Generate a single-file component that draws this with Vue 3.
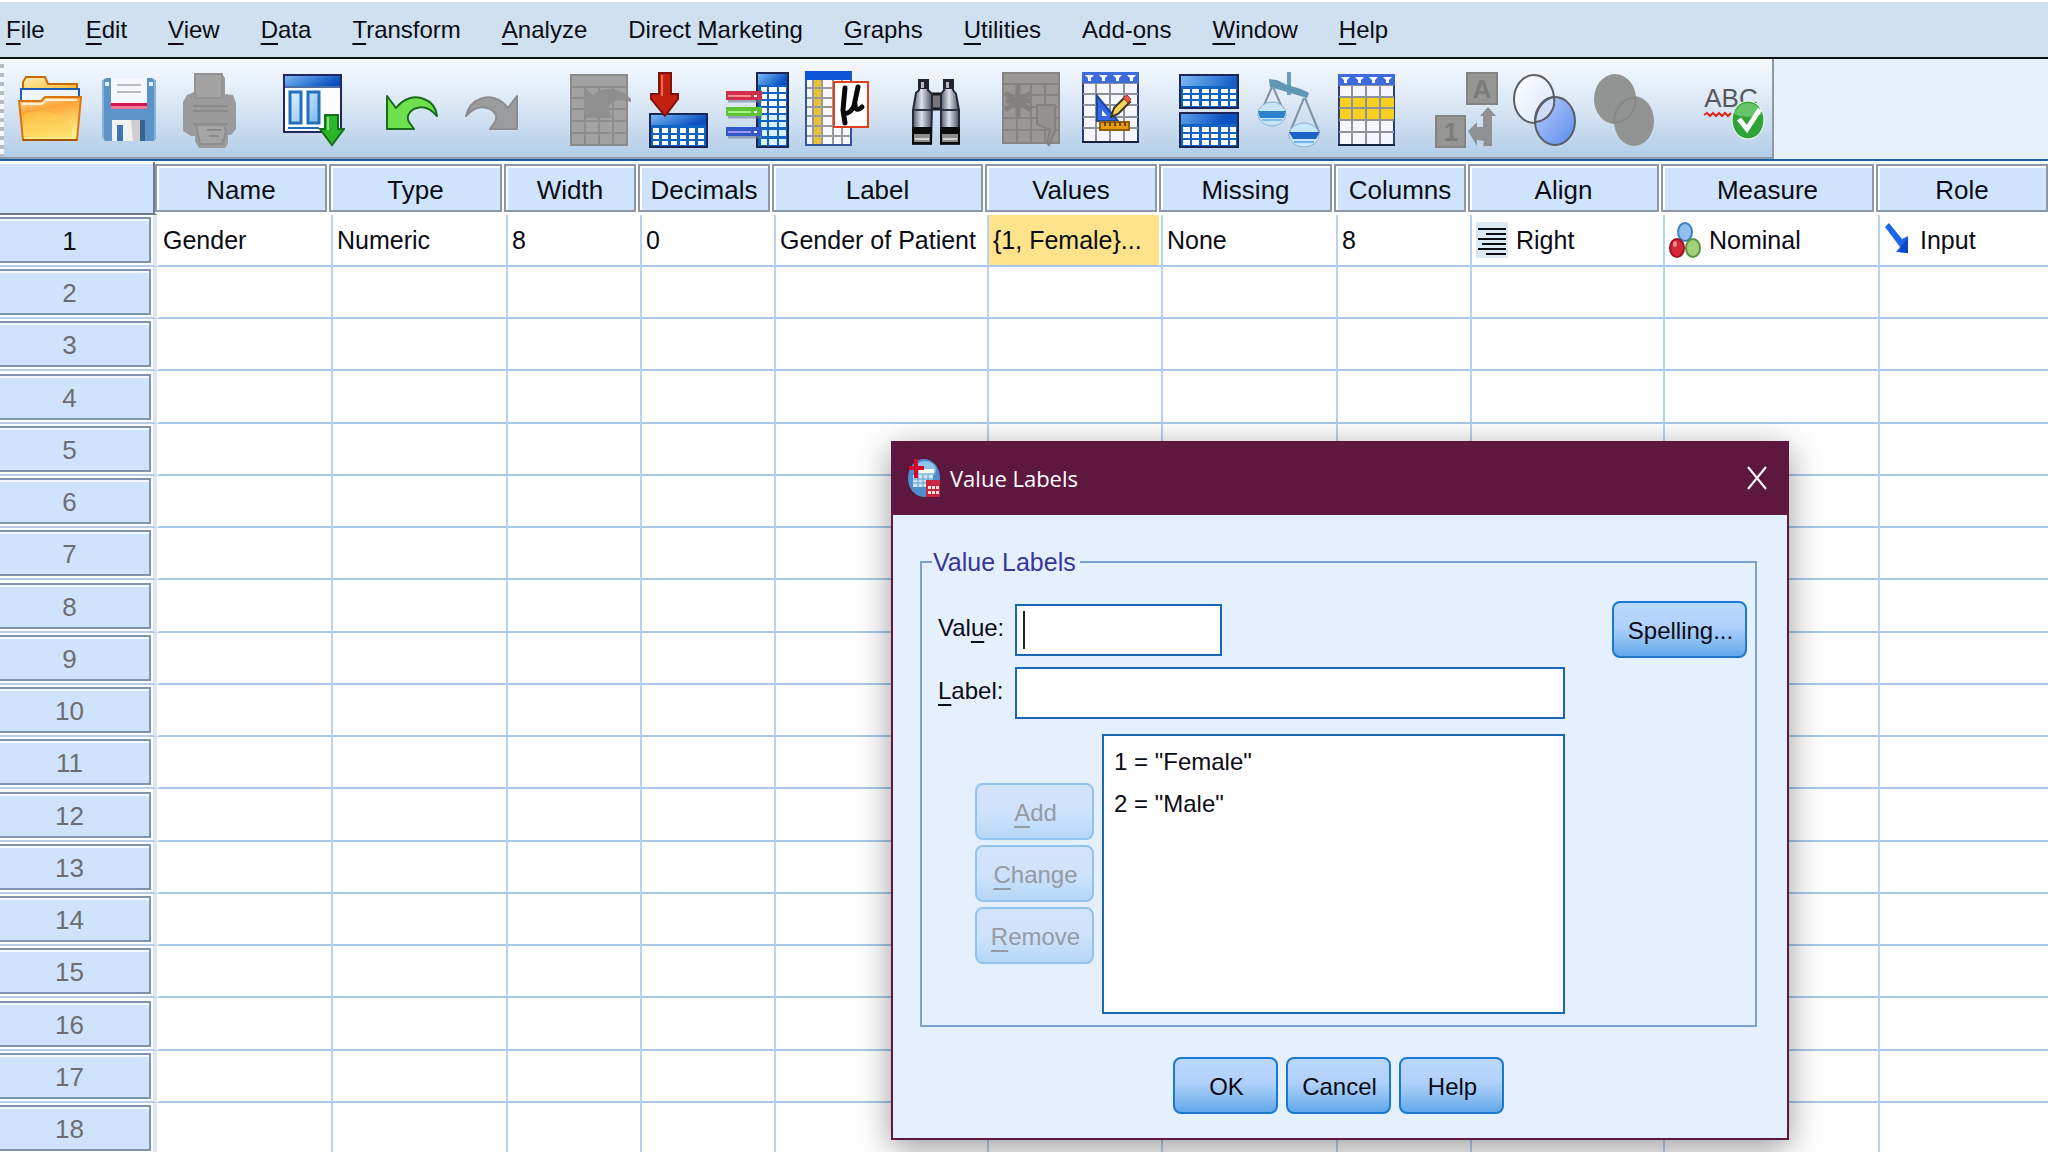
<script setup>
import { ref } from 'vue'

const menus = [
  ['', 'F', 'ile'],
  ['', 'E', 'dit'],
  ['', 'V', 'iew'],
  ['', 'D', 'ata'],
  ['', 'T', 'ransform'],
  ['', 'A', 'nalyze'],
  ['Direct ', 'M', 'arketing'],
  ['', 'G', 'raphs'],
  ['', 'U', 'tilities'],
  ['Add-', 'o', 'ns'],
  ['', 'W', 'indow'],
  ['', 'H', 'elp'],
]

const columns = [
  { name: 'Name', cls: 'w-name' },
  { name: 'Type', cls: 'w-type' },
  { name: 'Width', cls: 'w-small' },
  { name: 'Decimals', cls: 'w-small' },
  { name: 'Label', cls: 'w-label' },
  { name: 'Values', cls: 'w-name' },
  { name: 'Missing', cls: 'w-type' },
  { name: 'Columns', cls: 'w-small' },
  { name: 'Align', cls: 'w-align' },
  { name: 'Measure', cls: 'w-measure' },
  { name: 'Role', cls: 'w-role' },
]

const variable = {
  Name: 'Gender',
  Type: 'Numeric',
  Width: '8',
  Decimals: '0',
  Label: 'Gender of Patient',
  Values: '{1, Female}...',
  Missing: 'None',
  Columns: '8',
  Align: 'Right',
  Measure: 'Nominal',
  Role: 'Input',
}

const value = ref('')
const label = ref('')
const valueLabels = ['1 = "Female"', '2 = "Male"']
</script>

<template>
  <div class="app">
    <nav class="menubar">
      <a v-for="m in menus" :key="m.join('')" href="#">{{ m[0] }}<u>{{ m[1] }}</u>{{ m[2] }}</a>
    </nav>

    <div class="toolbar-row">
      <div class="toolbar" role="toolbar">
        <span class="grip"></span>

        <div class="group">
          <button type="button" aria-label="Open">
            <svg viewBox="0 0 64 80">
              <defs>
                <linearGradient id="gFolder" x1="0" y1="0" x2="0.3" y2="1">
                  <stop offset="0" stop-color="#ffe3b5" />
                  <stop offset="0.35" stop-color="#ffa53a" />
                  <stop offset="1" stop-color="#fff08a" />
                </linearGradient>
                <linearGradient id="gTab" x1="0" y1="0" x2="1" y2="1">
                  <stop offset="0" stop-color="#fff2b0" />
                  <stop offset="1" stop-color="#f7a50e" />
                </linearGradient>
              </defs>
              <path d="M5 28V12l3-5h19l3 7h29v14z" fill="url(#gTab)" stroke="#c8690a" stroke-width="2" />
              <path d="M3 34V19h58v20z" fill="#eef6ff" stroke="#1d5cb8" stroke-width="2" />
              <path d="M1 31h22l4-4h36l-4 43H5z" fill="url(#gFolder)" stroke="#dd7210" stroke-width="2" />
              <path d="M5 45c16-7 36-4 50 10l-2 12H7z" fill="#ffcf4c" opacity="0.55" />
              <path d="M4 34h20l4-4h31" fill="none" stroke="#fff0d5" stroke-width="2" />
              <path d="M5 70h54" stroke="#a85408" stroke-width="2" />
            </svg>
          </button>
          <button type="button" aria-label="Save">
            <svg viewBox="0 0 64 80">
              <path d="M6 10l3-2h46l3 2v60l-2 1H8l-2-3z" fill="#5b93c7" />
              <path d="M6 10v58M58 10v60" stroke="#86b2dc" stroke-width="2" />
              <path d="M14 8h36v25H14z" fill="#f6f8fd" />
              <path d="M14 33h36v3H14z" fill="#d3134b" />
              <path d="M14 36h36v3H14z" fill="#f0799a" />
              <path d="M20 15h24M20 22h24" stroke="#b9bcc2" stroke-width="2" />
              <path d="M8 12h4v4H8zM52 12h4v4h-4z" fill="#e4effa" />
              <path d="M15 50h28v21H15z" fill="#f1f1f1" />
              <path d="M34 50h9v21h-7z" fill="#cfcfcf" />
              <path d="M43 50h5v21h-5z" fill="#356495" />
              <path d="M20 55h6v16h-6z" fill="#3a76b4" />
            </svg>
          </button>
          <button type="button" aria-label="Print" disabled>
            <svg viewBox="0 0 64 80">
              <path d="M19 4h27l3 4v16l8 1 3 8v26l-5 6h-3v8l-3 5H23l-4-7v-5h-4l-8-5V32l4-7 7-3z" fill="#9b9b9b" />
              <path d="M19 4h27v24H19z" fill="#a3a3a3" stroke="#929292" stroke-width="2" />
              <path d="M17 36h35M17 41h35M17 54h35" stroke="#8a8a8a" stroke-width="2" />
              <path d="M20 55h28l2 7-4 12H24z" fill="#a5a5a5" stroke="#8e8e8e" stroke-width="2" />
              <path d="M31 60h14M33 66h10" stroke="#8a8a8a" stroke-width="2" />
            </svg>
          </button>
        </div>

        <div class="group gap-wide">
          <button type="button" aria-label="Recall recently used dialogs">
            <svg viewBox="0 0 64 80">
              <defs>
                <linearGradient id="gBlue" x1="0" y1="0" x2="1" y2="0.4">
                  <stop offset="0" stop-color="#7fb7f2" />
                  <stop offset="0.5" stop-color="#3f86dc" />
                  <stop offset="1" stop-color="#0b4fc0" />
                </linearGradient>
                <linearGradient id="gPane" x1="0" y1="0" x2="1" y2="1">
                  <stop offset="0" stop-color="#e2f2ff" />
                  <stop offset="1" stop-color="#7cb9ef" />
                </linearGradient>
              </defs>
              <path d="M3 5h57v57H3z" fill="#fbfdff" stroke="#23265f" stroke-width="2" />
              <path d="M4 6h55v11H4z" fill="url(#gBlue)" />
              <path d="M4 17h55" stroke="#4d6da8" stroke-width="2" />
              <path d="M9 22h11v31H9zM27 22h11v31H27z" fill="url(#gPane)" stroke="#2270bd" stroke-width="3" />
              <path d="M7 58h31" stroke="#2270bd" stroke-width="2" />
              <path d="M44 45h13v14h6L51 75 39 59h5z" fill="#2bb52b" stroke="#14701a" stroke-width="2" />
              <path d="M47 47v13" stroke="#8be07a" stroke-width="2" />
            </svg>
          </button>
        </div>

        <div class="group gap">
          <button type="button" aria-label="Undo">
            <svg viewBox="0 0 64 80">
              <path d="M7 26l9 12c8-10 19-13 28-9 8 3 12 9 13 17-7-8-14-10-20-8-8 2-11 9-8 14l5 7H7z" fill="#6fe04d" stroke="#176b1b" stroke-width="2" stroke-linejoin="round" />
            </svg>
          </button>
          <button type="button" aria-label="Redo" disabled>
            <svg viewBox="0 0 64 80">
              <path d="M58 26l-9 12c-8-10-19-13-28-9-8 3-12 9-14 17 7-8 15-10 21-8 8 2 11 9 8 14l-5 7h27z" fill="#9a9c9e" stroke="#8b8d90" stroke-width="2" stroke-linejoin="round" />
            </svg>
          </button>
        </div>

        <div class="group gap-widest">
          <button type="button" aria-label="Go to case" disabled>
            <svg viewBox="0 0 64 80">
              <path d="M3 5h56v70H3z" fill="#a2a2a2" stroke="#8b8b8b" stroke-width="2" />
              <path d="M4 17h54M4 28h54M4 39h54M4 51h54M4 63h54M17 17v58M31 17v58M45 17v58" stroke="#8d8d8d" stroke-width="2" />
              <path d="M17 18l8 7c8-8 26-9 38 4v3c-14-4-23-1-22 8l3 8H17z" fill="#8f8f8f" />
            </svg>
          </button>
          <button type="button" aria-label="Go to variable">
            <svg viewBox="0 0 64 80">
              <path d="M3 44h57v33H3z" fill="#0f63c2" stroke="#1d2456" stroke-width="2" />
              <path d="M4 45h55v10H4z" fill="url(#gBlue)" />
              <path d="M6 58h6v5H6zM15 58h6v5h-6zM24 58h6v5h-6zM33 58h6v5h-6zM42 58h6v5h-6zM51 58h6v5h-6zM6 65h6v4H6zM15 65h6v4h-6zM24 65h6v4h-6zM33 65h6v4h-6zM42 65h6v4h-6zM51 65h6v4h-6zM6 71h6v4H6zM15 71h6v4h-6zM24 71h6v4h-6zM33 71h6v4h-6zM42 71h6v4h-6zM51 71h6v4h-6z" fill="#fff" />
              <path d="M12 3h12v21h7v5L18 46 4 29v-5h8z" fill="#c4200f" stroke="#7d130b" stroke-width="2" />
              <path d="M15 5v21" stroke="#ef6a55" stroke-width="2" />
            </svg>
          </button>
          <button type="button" aria-label="Variables">
            <svg viewBox="0 0 64 80">
              <path d="M31 3h31v74H31z" fill="#0f63c2" stroke="#1d2456" stroke-width="2" />
              <path d="M32 4h29v11H32z" fill="url(#gBlue)" />
              <path d="M35 17h6v5h-6zM43 17h8v5h-8zM53 17h7v5h-7zM35 24h6v5h-6zM43 24h8v5h-8zM53 24h7v5h-7zM35 31h6v5h-6zM43 31h8v5h-8zM53 31h7v5h-7zM35 38h6v5h-6zM43 38h8v5h-8zM53 38h7v5h-7z" fill="#fff" />
              <path d="M35 45h6v5h-6zM43 45h8v5h-8zM53 45h7v5h-7zM35 52h6v5h-6zM43 52h8v5h-8zM53 52h7v5h-7zM35 60h6v6h-6zM43 60h8v6h-8zM53 60h7v6h-7zM35 69h6v6h-6zM43 69h8v6h-8zM53 69h7v6h-7z" fill="#d8f0ff" />
              <path d="M2 31h34M2 47h34M2 67h34" stroke="#6f7d93" stroke-width="3" opacity="0.6" />
              <path d="M0 21h36v9H0z" fill="#d22c4c" />
              <path d="M0 37h36v9H0z" fill="#5cc334" />
              <path d="M0 57h36v9H0z" fill="#3158c8" />
              <path d="M2 26h23" stroke="#ff8f8f" stroke-width="2" />
              <path d="M2 42h23" stroke="#a6f285" stroke-width="2" />
              <path d="M2 62h23" stroke="#a393f4" stroke-width="2" />
              <path d="M28 26h3M28 42h3M28 62h3" stroke="#fff" stroke-width="2" />
            </svg>
          </button>
          <button type="button" aria-label="Run descriptive statistics">
            <svg viewBox="0 0 64 80">
              <path d="M1 2h45v73H1z" fill="#f6f8fc" stroke="#345699" stroke-width="2" />
              <path d="M0 1h46v9H0z" fill="#0c55d6" />
              <path d="M9 10h7v64H9z" fill="#e8c23a" />
              <path d="M2 18h43M2 28h43M2 37h43M2 46h43M2 56h43M2 66h43M8 10v64M17 10v64M28 10v64M37 10v64" stroke="#97999c" stroke-width="2" />
              <path d="M29 12h34v45H29z" fill="#fff" stroke="#e0411c" stroke-width="2" />
              <path d="M40 18L38 40c0 6 7 4 11-4l4-19M50 34c0 7 4 6 7 3M38 40l2 13" fill="none" stroke="#0a0a0a" stroke-width="5" stroke-linecap="round" />
            </svg>
          </button>
        </div>

        <div class="group gap">
          <button type="button" aria-label="Find">
            <svg viewBox="0 0 64 80">
              <defs>
                <linearGradient id="gTube" x1="0" y1="0" x2="1" y2="0">
                  <stop offset="0" stop-color="#565b68" />
                  <stop offset="0.45" stop-color="#dde2ec" />
                  <stop offset="1" stop-color="#4a4f5c" />
                </linearGradient>
              </defs>
              <path d="M26 24h12v15H26z" fill="#777" stroke="#17171c" stroke-width="3" />
              <path d="M15 10h9v10l4 4v14l-1 36H9V40l3-17 3-3z" fill="url(#gTube)" stroke="#26293a" stroke-width="2" />
              <path d="M40 10h9v10l3 4 3 16v34H37V24l3-4z" fill="url(#gTube)" stroke="#26293a" stroke-width="2" />
              <path d="M14 9h11v10H14zM39 9h11v10H39z" fill="#22232b" />
              <path d="M17 12h3v6h-3zM42 12h3v6h-3z" fill="#b9bcc4" />
              <path d="M9 40h18M37 40h18" stroke="#2d3142" stroke-width="2" />
              <path d="M9 58h18v15H9zM37 58h18v15H37z" fill="#8d8d8d" stroke="#0b0b0d" stroke-width="2" />
              <path d="M8 57h20v7H8zM36 57h20v7H36z" fill="#0b0b0d" />
              <path d="M11 69h14M39 69h14" stroke="#d4d4d4" stroke-width="2" />
            </svg>
          </button>
        </div>

        <div class="group gap-tight">
          <button type="button" aria-label="Insert cases" disabled>
            <svg viewBox="0 0 64 80">
              <path d="M4 3h56v70H4z" fill="#999895" stroke="#868583" stroke-width="2" />
              <path d="M5 14h54M5 25h54M5 37h54M5 48h54M5 60h54M18 14v58M32 14v58M46 14v58" stroke="#858482" stroke-width="2" />
              <path d="M19 14v34M6 23l26 17M32 23L6 40M7 31h24" stroke="#82817f" stroke-width="5" />
              <path d="M38 35h18v26l-6 14-2-2 3-13-13-6z" fill="#939290" stroke="#82817f" stroke-width="2" />
            </svg>
          </button>
          <button type="button" aria-label="Insert variable">
            <svg viewBox="0 0 64 80">
              <path d="M5 3h55v69H5z" fill="#f5f7fd" stroke="#2c3f78" stroke-width="2" />
              <path d="M5 13h55M5 24h55M5 35h55M5 47h55M5 58h55M18 3v69M32 3v69M46 3v69" stroke="#8d929c" stroke-width="2" />
              <path d="M4 2h57v11H4z" fill="#3d6bdb" />
              <path d="M7 5h9l-3 3v3h-3V8zM21 5h9l-3 3v3h-3V8zM35 5h9l-3 3v3h-3V8zM49 5h9l-3 3v3h-3V8z" fill="#fff" />
              <path d="M19 26l21 25H19z" fill="#3168e8" stroke="#2046a0" stroke-width="2" />
              <path d="M24 40l5 6h-5z" fill="#fff" />
              <path d="M33 47l3-9 11-11 5 5-12 12z" fill="#f4d35a" stroke="#3b3524" stroke-width="2" />
              <path d="M45 28l4-3 4 4-3 4z" fill="#e25c4a" stroke="#9d3b33" />
              <path d="M22 52h29v8H22z" fill="#e39a12" stroke="#95600a" stroke-width="2" />
              <path d="M27 52v4M32 52v4M37 52v4M42 52v4M47 52v4" stroke="#6d4503" stroke-width="2" />
              <path d="M4 72h57" stroke="#14223f" stroke-width="2" />
            </svg>
          </button>
        </div>

        <div class="group gap">
          <button type="button" aria-label="Split file">
            <svg viewBox="0 0 64 80">
              <path d="M3 5h58v33H3zM3 43h58v34H3z" fill="#0f63c2" stroke="#1d2456" stroke-width="2" />
              <path d="M4 6h56v10H4zM4 44h56v10H4z" fill="url(#gBlue)" />
              <path d="M6 19h7v4H6zM15 19h7v4h-7zM25 19h7v4h-7zM34 19h7v4h-7zM44 19h7v4h-7zM53 19h6v4h-6zM6 25h7v4H6zM15 25h7v4h-7zM25 25h7v4h-7zM34 25h7v4h-7zM44 25h7v4h-7zM53 25h6v4h-6zM6 31h7v5H6zM15 31h7v5h-7zM25 31h7v5h-7zM34 31h7v5h-7zM44 31h7v5h-7zM53 31h6v5h-6z" fill="#fff" />
              <path d="M6 57h7v5H6zM15 57h7v5h-7zM25 57h7v5h-7zM34 57h7v5h-7zM44 57h7v5h-7zM53 57h6v5h-6zM6 64h7v4H6zM15 64h7v4h-7zM25 64h7v4h-7zM34 64h7v4h-7zM44 64h7v4h-7zM53 64h6v4h-6zM6 70h7v5H6zM15 70h7v5h-7zM25 70h7v5h-7zM34 70h7v5h-7zM44 70h7v5h-7zM53 70h6v5h-6z" fill="#fff" />
            </svg>
          </button>
          <button type="button" aria-label="Weight cases">
            <svg viewBox="0 0 64 80">
              <path d="M31 2h4v23h-4z" fill="#6b9fba" />
              <path d="M13 9l8 1 10 5 14 4 8 4-2 5-20-6-17-5z" fill="#5f97b3" />
              <path d="M16 17L5 42M17 17l11 25M48 28L34 62M49 28l14 34" fill="none" stroke="#7e93a5" stroke-width="2" />
              <ellipse cx="16" cy="44" rx="14" ry="12" fill="#c9e7fb" stroke="#8fb0cc" />
              <path d="M2 41h28l-2 7H4z" fill="#2b82cf" />
              <path d="M6 50h20" stroke="#7cc0ee" stroke-width="2" />
              <ellipse cx="48" cy="65" rx="15" ry="12" fill="#c9e7fb" stroke="#8fb0cc" />
              <path d="M33 62h31l-4 7H37z" fill="#1e64c4" />
              <path d="M38 72h20" stroke="#6fb6ec" stroke-width="2" />
            </svg>
          </button>
          <button type="button" aria-label="Select cases">
            <svg viewBox="0 0 64 80">
              <path d="M4 5h55v70H4z" fill="#f5f7fd" stroke="#2c3f78" stroke-width="2" />
              <path d="M5 27h54v22H5z" fill="#f8d020" />
              <path d="M4 15h55M4 27h55M4 38h55M4 50h55M4 62h55M17 5v70M31 5v70M45 5v70" stroke="#8d929c" stroke-width="2" />
              <path d="M3 4h57v11H3z" fill="#3d6bdb" />
              <path d="M6 7h9l-3 3v3H9v-3zM20 7h9l-3 3v3h-3v-3zM34 7h9l-3 3v3h-3v-3zM48 7h9l-3 3v3h-3v-3z" fill="#fff" />
              <path d="M3 75h57" stroke="#14223f" stroke-width="2" />
            </svg>
          </button>
        </div>

        <div class="group gap">
          <button type="button" aria-label="Value labels" disabled>
            <svg viewBox="0 0 64 80">
              <path d="M33 3h30v31H33zM2 46h29v31H2z" fill="#969795" stroke="#838482" stroke-width="2" />
              <text x="48" y="28" class="glyph">A</text>
              <text x="17" y="71" class="glyph">1</text>
              <path d="M54 37l8 9h-4v30H49l1-5-7-1v6L34 61l9-9v5h6V46h-3z" fill="#8f9294" />
            </svg>
          </button>
          <button type="button" aria-label="Use variable sets">
            <svg viewBox="0 0 64 80">
              <defs>
                <linearGradient id="gSetA" x1="0" y1="0" x2="1" y2="1">
                  <stop offset="0" stop-color="#fff" />
                  <stop offset="1" stop-color="#d9e4fb" />
                </linearGradient>
                <linearGradient id="gSetB" x1="0" y1="0" x2="1" y2="1">
                  <stop offset="0" stop-color="#b9cdf8" />
                  <stop offset="1" stop-color="#5b8cf0" />
                </linearGradient>
              </defs>
              <ellipse cx="21" cy="29" rx="20" ry="24" fill="url(#gSetA)" stroke="#595d66" stroke-width="2" />
              <ellipse cx="42" cy="51" rx="20" ry="24" fill="url(#gSetB)" stroke="#595d66" stroke-width="2" />
              <path d="M22 52c1-13 8-23 19-25 2 12-6 24-19 25z" fill="#cfdcf8" stroke="#595d66" stroke-width="2" />
            </svg>
          </button>
          <button type="button" aria-label="Show all variables" disabled>
            <svg viewBox="0 0 64 80">
              <ellipse cx="23" cy="29" rx="21" ry="25" fill="#929493" />
              <ellipse cx="42" cy="51" rx="20" ry="25" fill="#929493" />
              <path d="M22 53c0-14 8-24 21-26 2 13-6 24-21 26z" fill="none" stroke="#868887" stroke-width="2" />
            </svg>
          </button>
        </div>

        <div class="group gap-widest">
          <button type="button" aria-label="Spell check">
            <svg viewBox="0 0 64 80">
              <text x="30" y="37" class="abc">ABC</text>
              <path d="M3 45l3-2 3 3 3-3 3 3 3-3 3 3 3-3 3 3 3-3" fill="none" stroke="#dc2a1a" stroke-width="2" />
              <ellipse cx="47" cy="50" rx="16" ry="19" fill="#2fa336" stroke="#fff" stroke-width="1" />
              <path d="M33 44c3-8 8-11 14-11s11 3 14 11c-8 4-20 4-28 0z" fill="#7fd07c" opacity="0.7" />
              <path d="M38 49l8 10 13-20" fill="none" stroke="#fff" stroke-width="5" />
            </svg>
          </button>
        </div>
      </div>
    </div>

    <table class="sheet">
      <colgroup>
        <col class="w-row" />
        <col v-for="c in columns" :key="c.name" :class="c.cls" />
      </colgroup>
      <thead>
        <tr>
          <td class="corner"></td>
          <th v-for="c in columns" :key="c.name" scope="col">
            <span class="col-face">{{ c.name }}</span>
          </th>
        </tr>
      </thead>
      <tbody>
        <tr v-for="n in 18" :key="n">
          <th scope="row">
            <span class="row-face" :class="{ unused: n > 1 }">{{ n }}</span>
          </th>
          <td v-for="c in columns" :key="c.name" :class="{ current: n === 1 && c.name === 'Values' }">
            <span v-if="n === 1" class="cell">
              <svg v-if="c.name === 'Align'" class="icon" viewBox="0 0 32 36">
                <path d="M0 0h32v36H0z" fill="#dde8f5" />
                <path d="M2 7h28M10 12h20M2 17h28M6 22h24M2 27h28M10 32h20" stroke="#0c0c12" stroke-width="2" />
              </svg>
              <svg v-else-if="c.name === 'Measure'" class="icon" viewBox="0 0 32 36">
                <ellipse cx="16" cy="10" rx="7" ry="9" fill="#8fc0ef" stroke="#3f7fc4" stroke-width="2" />
                <ellipse cx="8" cy="26" rx="7" ry="9" fill="#d6283a" stroke="#9c1420" stroke-width="2" />
                <ellipse cx="24" cy="26" rx="7" ry="9" fill="#a4d07c" stroke="#5a9440" stroke-width="2" />
                <ellipse cx="6" cy="22" rx="2" ry="3" fill="#f08c94" />
              </svg>
              <svg v-else-if="c.name === 'Role'" class="icon arrow" viewBox="0 0 28 36">
                <path d="M1 5l4-4 13 16 6-3v17l-12-1 4-5z" fill="#1b66e6" />
                <path d="M17 24l7-8v15l-8-1z" fill="#0a48c4" />
              </svg>
              {{ variable[c.name] }}
            </span>
          </td>
        </tr>
      </tbody>
    </table>

    <section class="dialog" role="dialog" aria-labelledby="dialog-title">
      <header class="titlebar">
        <svg class="app-icon" viewBox="0 0 32 40">
          <ellipse cx="16" cy="20" rx="16" ry="19" fill="#4c8fcb" />
          <ellipse cx="17" cy="12" rx="11" ry="9" fill="#8fc3e8" />
          <path d="M11 11h15v4H11z" fill="#fff" />
          <path d="M5 17h20v12H5z" fill="#cfe4f5" />
          <path d="M5 21h20M5 25h20M10 17v12M15 17v12M20 17v12" stroke="#5c9bd0" />
          <path d="M6 1h4v7h6v4h-6v8H6v-8H1V8h5z" fill="#d4092f" />
          <path d="M18 22h14v17H18z" fill="#c5273c" />
          <path d="M20 28h3v3h-3zM24 28h3v3h-3zM28 28h3v3h-3zM20 33h3v3h-3zM24 33h3v3h-3zM28 33h3v3h-3z" fill="#ffdfe2" />
        </svg>
        <h1 id="dialog-title">Value Labels</h1>
        <button class="close" type="button" aria-label="Close">
          <svg viewBox="0 0 20 24"><path d="M1 1l18 22M19 1L1 23" stroke="#fff" stroke-width="2" /></svg>
        </button>
      </header>

      <form class="dialog-body" @submit.prevent>
        <fieldset>
          <legend>Value Labels</legend>
          <div class="line">
            <label for="value">Val<u>u</u>e:</label>
            <input id="value" v-model="value" class="short caret" type="text" />
            <button class="btn spelling" type="button">Spelling...</button>
          </div>
          <div class="line label-line">
            <label for="label"><u>L</u>abel:</label>
            <input id="label" v-model="label" type="text" />
          </div>
          <div class="lower">
            <div class="actions">
              <button class="btn" type="button" disabled><u>A</u>dd</button>
              <button class="btn" type="button" disabled><u>C</u>hange</button>
              <button class="btn" type="button" disabled><u>R</u>emove</button>
            </div>
            <select multiple size="6" aria-label="Defined value labels">
              <option v-for="v in valueLabels" :key="v">{{ v }}</option>
            </select>
          </div>
        </fieldset>
        <footer>
          <button class="btn" type="submit">OK</button>
          <button class="btn" type="button">Cancel</button>
          <button class="btn" type="button">Help</button>
        </footer>
      </form>
    </section>
  </div>
</template>

<style>
body {
  margin: 0;
  background: #fff;
}
</style>

<style scoped>
* {
  box-sizing: border-box;
}
.app {
  position: relative;
  height: 100vh;
  overflow: hidden;
  font-family: "Liberation Sans", Arial, sans-serif;
  font-size: 24px;
  color: #0b0b14;
  background: #fff;
}
button,
input,
select {
  font: inherit;
  color: inherit;
}
u {
  text-decoration-thickness: 2px;
  text-underline-offset: 5px;
}

/* Menu bar */
.menubar {
  display: flex;
  align-items: center;
  gap: 41px;
  height: 59px;
  padding-left: 6px;
  border-top: 2px solid #fff;
  border-bottom: 2px solid #111;
  background: #cfe0f1;
}
.menubar a {
  color: inherit;
  text-decoration: none;
  white-space: nowrap;
}

/* Toolbar */
.toolbar-row {
  display: flex;
  height: 102px;
  margin-bottom: 1px;
  background: #e6f1fc;
  border-bottom: 2px solid #1f5fa8;
}
.toolbar {
  display: flex;
  align-items: center;
  padding-top: 3px;
  border-right: 2px solid #8f99a6;
  border-bottom: 2px solid #9099a5;
  background: linear-gradient(#f7fafe, #dce8f5 45%, #b3cde8);
}
.grip {
  width: 4px;
  height: 92px;
  margin-right: 6px;
  background: repeating-linear-gradient(#b4bcc6 0 4px, #f4f8fc 4px 9px);
}
.group {
  display: flex;
}
.gap-tight {
  margin-left: 16px;
}
.gap {
  margin-left: 20px;
}
.gap-wide {
  margin-left: 26px;
}
.gap-widest {
  margin-left: 30px;
}
.toolbar button {
  display: flex;
  justify-content: center;
  width: 79px;
  padding: 0;
  border: 0;
  background: none;
}
.toolbar svg {
  width: 64px;
  height: 80px;
}
.glyph {
  font: bold 26px "Liberation Sans", sans-serif;
  text-anchor: middle;
  fill: #7c7d7b;
}
.abc {
  font: 26px "Liberation Sans", sans-serif;
  text-anchor: middle;
  fill: #55585c;
}

/* Variable sheet */
.sheet {
  width: 100%;
  table-layout: fixed;
  border-collapse: separate;
  border-spacing: 0;
  font-size: 26px;
  line-height: 30px;
}
.w-row { width: 157px; }
.w-name { width: 174px; }
.w-type { width: 175px; }
.w-small { width: 134px; }
.w-label { width: 213px; }
.w-align { width: 193px; }
.w-measure { width: 215px; }
.sheet th,
.sheet td {
  padding: 0;
  font-weight: normal;
}
.sheet thead th {
  height: 53px;
  vertical-align: top;
  padding-top: 2px;
}
.sheet .corner {
  border-right: 2px solid #fff;
  border-bottom: 2px solid #6e7b8c;
  background: #cfe4fc;
  box-shadow: inset -2px 0 #6e7b8c, inset 0 2px #fff;
}
.col-face {
  display: block;
  margin: 0 4px 0 -2px;
  padding: 9px 0 5px;
  border: 2px solid #8c98aa;
  background: #cfe4fc;
  box-shadow: inset 2px 2px #fff;
}
th:last-child .col-face {
  margin-right: 0;
}
.sheet tbody th {
  height: 52px;
  border-bottom: 2px solid #b4cce8;
  border-right: 4px solid #dce8fa;
  padding-right: 2px;
}
.row-face {
  display: block;
  padding: 7px 10px 5px 0;
  border: 2px solid #8094ae;
  border-left: 0;
  background: #cfe4fc;
  box-shadow: inset 0 2px #f4f9ff;
}
.unused {
  color: #6d6d72;
}
.sheet tbody td {
  height: 52px;
  border-left: 2px solid #b9d2ee;
  border-bottom: 2px solid #a9c8e8;
  font-size: 25px;
  white-space: nowrap;
}
/* row pitch is a little over 52px */
.sheet tbody tr:nth-child(4n) td {
  height: 53px;
}
.sheet tbody td:nth-child(2) {
  border-left-color: #fff;
}
.sheet .current {
  background: #fde48c;
  box-shadow: inset -2px 0 #fff;
}
.cell {
  display: flex;
  align-items: center;
  gap: 8px;
  padding-left: 4px;
}
.icon {
  width: 32px;
  height: 36px;
}
.arrow {
  width: 28px;
}

/* Value Labels dialog */
.dialog {
  position: absolute;
  top: 441px;
  left: 891px;
  width: 898px;
  border: 2px solid #5e173e;
  background: #e5f0fe;
  box-shadow: 0 8px 32px rgba(0, 0, 0, 0.4);
}
.titlebar {
  display: flex;
  align-items: center;
  height: 72px;
  padding: 0 20px 2px 15px;
  color: #fff;
  background: #5e173e;
}
.app-icon {
  width: 32px;
  height: 40px;
}
.titlebar h1 {
  flex: 1;
  margin: 0 0 0 10px;
  font: 22px "Open Sans", sans-serif;
}
.close {
  display: flex;
  padding: 0;
  border: 0;
  background: none;
}
.close svg {
  width: 20px;
  height: 24px;
}
.dialog-body {
  padding: 32px 30px 24px 27px;
}
fieldset {
  margin: 0;
  padding: 24px 8px 11px 10px;
  border: 2px solid #7ba2d2;
  min-width: 0;
}
legend {
  padding: 0 4px 0 1px;
  font-size: 25px;
  line-height: 30px;
  color: #36369c;
}
.line {
  display: flex;
  align-items: center;
  padding-left: 6px;
}
.line label {
  width: 77px;
  padding-bottom: 4px;
}
.line input {
  width: 550px;
  height: 52px;
  padding: 0 8px;
  border: 2px solid #1b66b5;
  background: #fff;
  outline: 0;
}
.line .short {
  width: 207px;
}
.line .caret {
  background: linear-gradient(#222, #222) 6px center / 2px 38px no-repeat #fff;
}
.label-line {
  margin-top: 9px;
}
.lower {
  display: flex;
  gap: 8px;
  margin-top: 15px;
  padding-left: 43px;
}
.actions {
  display: flex;
  flex-direction: column;
  gap: 5px;
  width: 119px;
  padding-top: 49px;
}
.lower select {
  width: 463px;
  height: 280px;
  padding: 12px 0;
  border: 2px solid #1b66b5;
  border-radius: 0;
  background: #fff;
  outline: 0;
  overflow: auto;
}
.lower option {
  min-height: 42px;
  padding: 0 10px;
  line-height: 42px;
}
.btn {
  height: 57px;
  padding: 2px 0 0 2px;
  border: 2px solid #1a78cf;
  border-radius: 8px;
  background: linear-gradient(#bcd8fd, #b0d1fb 45%, #8fc1f4 70%, #62a8ea);
}
.btn:disabled {
  border-color: #93c2ee;
  color: #949ba3;
  background: linear-gradient(#d3e4fb, #cfe3fb 50%, #b5d7f8);
}
.spelling {
  width: 135px;
  margin-left: auto;
}
footer {
  display: flex;
  justify-content: center;
  gap: 8px;
  margin-top: 30px;
}
footer .btn {
  width: 105px;
}
</style>
